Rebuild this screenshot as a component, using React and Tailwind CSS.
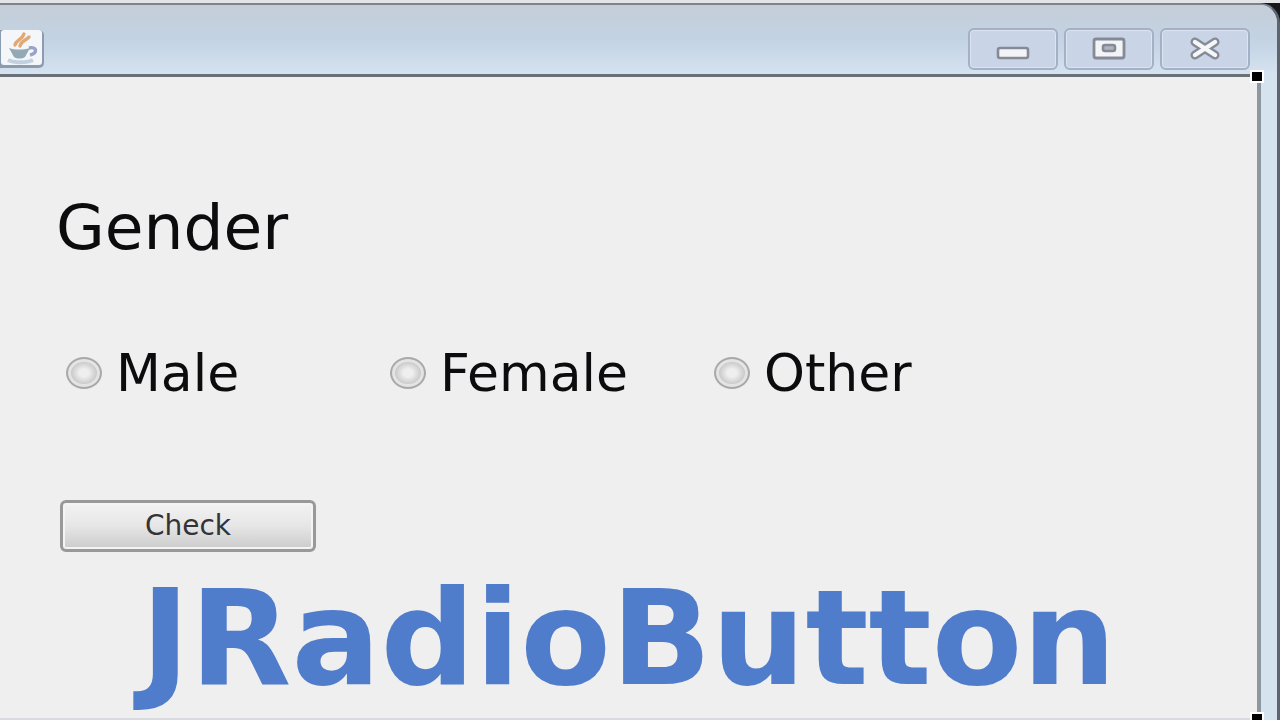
import { useState } from 'react';

const OPTIONS = ['Male', 'Female', 'Other'];

const JavaIcon = () => (
  <svg viewBox="0 0 46 42" className="w-[46px] h-[42px] shrink-0" aria-hidden="true">
    <rect x="-4" y="2" width="48" height="38" rx="5" fill="#8b9cb0" />
    <rect x="1" y="2" width="41" height="35" rx="3" fill="#f4f6fa" />
    <path d="M15 17c1-5 7-5 9-11M20 18c1-5 5-5 9-9" fill="none" stroke="#e0a875" strokeWidth="3.4" strokeLinecap="round" />
    <path d="M9 20c6 2 14 2 21 0l-5 9c-3 2-8 2-11 0z" fill="#93a9b6" />
    <path d="M29 20c8-2 9 5 1 7" fill="none" stroke="#99a3c6" strokeWidth="3.4" />
    <path d="M8 32c6 3 19 3 25 0" fill="none" stroke="#c2d0df" strokeWidth="4" />
  </svg>
);

const MinimizeIcon = () => (
  <svg viewBox="0 0 34 24" className="w-[34px] h-6" aria-hidden="true">
    <rect x="2" y="11" width="30" height="10" rx="2" fill="#f3f4f7" stroke="#858a96" strokeWidth="2.6" />
  </svg>
);

const MaximizeIcon = () => (
  <svg viewBox="0 0 34 24" className="w-[34px] h-6" aria-hidden="true">
    <rect x="2" y="2" width="30" height="19" rx="2" fill="#f3f4f7" stroke="#858a96" strokeWidth="2.8" />
    <rect x="11" y="8" width="12" height="6" rx="2" fill="#aeb3bc" stroke="#858a96" strokeWidth="2.6" />
  </svg>
);

const CloseIcon = () => (
  <svg viewBox="0 0 34 24" className="w-[34px] h-6" aria-hidden="true">
    <path d="M7 5l20 13M27 5L7 18" fill="none" stroke="#858a96" strokeWidth="9" strokeLinecap="round" />
    <path d="M7 5l20 13M27 5L7 18" fill="none" stroke="#f5f6f8" strokeWidth="4.4" strokeLinecap="round" />
  </svg>
);

const WindowButton = ({ label, children }) => (
  <button type="button" aria-label={label}
    className="flex items-center justify-center w-[90px] h-[42px] rounded-md border-2 border-[#a3b0c6] bg-[#c9d5e6] shadow-[inset_0_0_0_1px_#dbe4f0]">
    {children}
  </button>
);

const App = () => {
  const [gender, setGender] = useState('');

  return (
    <div className="min-h-screen flex flex-col bg-[#15171a] font-['DejaVu_Sans',sans-serif] text-[#0c0c0e]">
      <div className="h-[3px] bg-[#e3e4e6]" />
      <div className="flex-1 flex flex-col border-t-2 border-r-3 border-t-[#7b848e] border-r-[#5b646f] rounded-tr-[20px] bg-[#d5e3ef] overflow-hidden">

        {/* Title bar */}
        <header className="flex items-start justify-between pt-[23px] pb-1 pr-[27px] bg-linear-to-b from-[#c5cdd8] via-[#c3d3e3] to-[#d5e2f0]">
          <JavaIcon />
          <div className="flex gap-[6px]">
            <WindowButton label="Minimize"><MinimizeIcon /></WindowButton>
            <WindowButton label="Maximize"><MaximizeIcon /></WindowButton>
            <WindowButton label="Close"><CloseIcon /></WindowButton>
          </div>
        </header>

        {/* Form panel with its selection handles */}
        <main className="relative flex-1 flex flex-col mr-4 border-t-3 border-r-4 border-b-2 border-t-[#6a7077] border-r-[#8d979e] border-b-[#d9dae0] bg-[#efefef]">
          <span className="absolute -top-[7px] -right-[7px] w-[14px] h-[13px] border-2 border-white bg-black" />
          <span className="absolute -bottom-[7px] -right-[7px] w-[14px] h-[13px] border-2 border-white bg-black" />

          <form className="flex flex-col items-start pt-[119px] pl-[60px]" onSubmit={(e) => e.preventDefault()}>
            <fieldset>
              <legend className="-ml-1 text-[63px] leading-[64px]">Gender</legend>
              <div className="flex pt-[87px] pl-[6px]">
                {OPTIONS.map((option) => (
                  <label key={option} className="flex items-center gap-3.5 w-[324px] text-[52px] leading-[52px]">
                    <input type="radio" name="gender" value={option} checked={gender === option} onChange={() => setGender(option)}
                      className="appearance-none shrink-0 w-9 h-8 rounded-[50%] border-2 border-[#a9a9a9] bg-radial from-[#efefef] from-20% to-[#c6c6c6] to-60% shadow-[inset_0_0_0_3px_#e4e4e4] checked:from-[#3c6f9c]" />
                    {option}
                  </label>
                ))}
              </div>
            </fieldset>
            <button type="submit"
              className="mt-[101px] w-[256px] h-[52px] rounded-md border-3 border-[#999999] bg-linear-to-b from-[#f3f3f3] from-0% via-[#e6e6e6] via-50% to-[#cbcbcb] shadow-[inset_0_0_0_2px_#f4f4f4] text-[28px] leading-8 text-[#333338]">
              Check
            </button>
          </form>

          <h1 className="mt-5 text-center font-bold text-[132px] leading-[132px] text-[#507dcb]">JRadioButton</h1>
        </main>
      </div>
    </div>
  );
};

export default App;
